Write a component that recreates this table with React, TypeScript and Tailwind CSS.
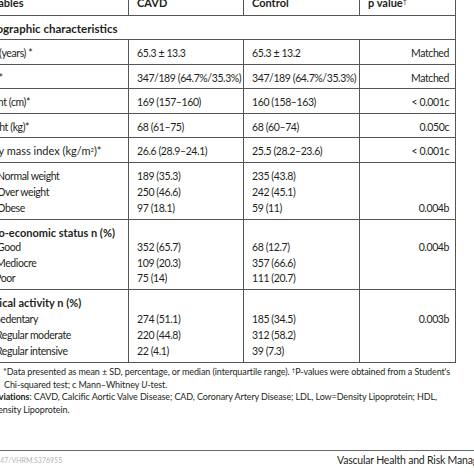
import React from "react";

type Row = {
  label: React.ReactNode[];
  cavd: string[];
  control: string[];
  p: string[];
  shift?: number[];
  lh?: number;
};

const rows: Row[] = [
  { label: ["Age (years) *"], cavd: ["65.3 ± 13.3"], control: ["65.3 ± 13.2"], p: ["Matched"], shift: [-20] },
  { label: ["Sex *"], cavd: ["347/189 (64.7%/35.3%)"], control: ["347/189 (64.7%/35.3%)"], p: ["Matched"], shift: [-19] },
  { label: ["Height (cm)*"], cavd: ["169 (157–160)"], control: ["160 (158–163)"], p: ["< 0.001c"], shift: [-22] },
  { label: ["Weight (kg)*"], cavd: ["68 (61–75)"], control: ["68 (60–74)"], p: ["0.050c"], shift: [-23] },
  {
    label: [
      <span key="b">
        Body mass index (kg/m<sup className="text-[6px]">2</sup>)*
      </span>,
    ],
    cavd: ["26.6 (28.9–24.1)"],
    control: ["25.5 (28.2–23.6)"],
    p: ["< 0.001c"],
    shift: [-21],
  },
  {
    label: ["Normal weight", "Over weight", "Obese"],
    cavd: ["189 (35.3)", "250 (46.6)", "97 (18.1)"],
    control: ["235 (43.8)", "242 (45.1)", "59 (11)"],
    p: ["", "", "0.004b"],
    shift: [-3, -3, -3],
  },
  {
    label: [<b key="s">Socio-economic status n (%)</b>, "Good", "Mediocre", "Poor"],
    cavd: ["", "352 (65.7)", "109 (20.3)", "75 (14)"],
    control: ["", "68 (12.7)", "357 (66.6)", "111 (20.7)"],
    p: ["", "0.004b", "", ""],
    shift: [-22, -3, -4, -5],
    lh: 15.3,
  },
  {
    label: [<b key="p">Physical activity n (%)</b>, "Sedentary", "Regular moderate", "Regular intensive"],
    cavd: ["", "274 (51.1)", "220 (44.8)", "22 (4.1)"],
    control: ["", "185 (34.5)", "312 (58.2)", "39 (7.3)"],
    p: ["", "0.003b", "", ""],
    shift: [-24, -5, -4, -4],
  },
];

function Lines({ items, right, lh = 16 }: { items: React.ReactNode[]; right?: boolean; lh?: number }) {
  return (
    <div className={right ? "text-right pr-[6px]" : "pl-[8px]"}>
      {items.map((t, i) => (
        <div key={i} className="whitespace-nowrap" style={{ height: lh, lineHeight: `${lh}px` }}>
          {t === "" ? "\u00a0" : t}
        </div>
      ))}
    </div>
  );
}

export default function App() {
  return (
    <div
      className="w-[474px] h-[474px] overflow-hidden bg-white text-[#231f20]"
      style={{ fontFamily: "Lato, 'Open Sans', sans-serif" }}
    >
      <div className="w-[456px] -mt-[9px] text-[10.5px] tracking-[-0.4px]">
        {/* header */}
        <div className="grid grid-cols-[129px_115px_116px_96px] border-b border-[#555] font-bold text-[11px] tracking-normal">
          <div className="border-r border-[#555] overflow-hidden py-[4px]">
            <div className="-ml-[21px] h-[16px] leading-[16px] whitespace-nowrap">Variables</div>
          </div>
          <div className="border-r border-[#555] py-[4px]">
            <Lines items={["CAVD"]} />
          </div>
          <div className="border-r border-[#555] py-[4px]">
            <Lines items={["Control"]} />
          </div>
          <div className="border-r border-[#555] py-[4px]">
            <Lines
              items={[
                <span key="pv">
                  p value<sup className="text-[7px] font-normal">†</sup>
                </span>,
              ]}
            />
          </div>
        </div>

        {/* section heading */}
        <div className="border-b border-r border-[#555] pt-[5px] pb-[2px] font-bold overflow-hidden text-[11.5px] tracking-normal">
          <div className="-ml-[28px] h-[16px] leading-[16px] whitespace-nowrap">
            Demographic characteristics
          </div>
        </div>

        {rows.map((r, i) => (
          <div
            key={i}
            className={
              "grid grid-cols-[129px_115px_116px_96px] border-b border-[#555] " +
              (r.label.length === 1 ? "[&>div]:pt-[5px] [&>div]:pb-[2.6px]" : "[&>div]:pt-[5px] [&>div]:pb-[3px]")
            }
          >
            <div className="border-r border-[#555] overflow-hidden">
              {r.label.map((t, j) => (
                <div
                  key={j}
                  className={
                    "whitespace-nowrap " +
                    (typeof t === "string" ? "" : "text-[11px] tracking-normal")
                  }
                  style={{
                    marginLeft: (r.shift ?? [])[j] ?? -20,
                    height: r.lh ?? 16,
                    lineHeight: `${r.lh ?? 16}px`,
                  }}
                >
                  {t}
                </div>
              ))}
            </div>
            <div className="border-r border-[#555]">
              <Lines items={r.cavd} lh={r.lh} />
            </div>
            <div className="border-r border-[#555]">
              <Lines items={r.control} lh={r.lh} />
            </div>
            <div className="border-r border-[#555]">
              <Lines items={r.p} right lh={r.lh} />
            </div>
          </div>
        ))}
      </div>

      {/* notes */}
      <div className="mt-[3px] text-[9px] leading-[12.5px] tracking-[-0.1px] whitespace-nowrap overflow-hidden">
        <div className="pl-[3px]">
          *Data presented as mean ± SD, percentage, or median (interquartile range). <sup className="text-[6px]">†</sup>P-values were obtained from a Student's
        </div>
        <div className="pl-[4px]">
          Chi-squared test; c Mann–Whitney <i>U</i>-test.
        </div>
        <div className="-ml-[25px]">
          <b>Abbreviations</b>: CAVD, Calcific Aortic Valve Disease; CAD, Coronary Artery Disease; LDL, Low=Density Lipoprotein; HDL,
        </div>
        <div className="-ml-[30px]">High-Density Lipoprotein.</div>
      </div>

      {/* page footer */}
      <div className="mt-[34px] border-t border-[#666]">
        <div className="flex items-center whitespace-nowrap h-[19px]">
          <div className="w-[337px] shrink-0 overflow-hidden">
            <div className="text-[7px] text-[#b5b5b5] -ml-[64px]">
              https://doi.org/10.2147/VHRM.S376955
            </div>
          </div>
          <div className="text-[10.5px] tracking-[-0.2px]">Vascular Health and Risk Management</div>
        </div>
      </div>
    </div>
  );
}
